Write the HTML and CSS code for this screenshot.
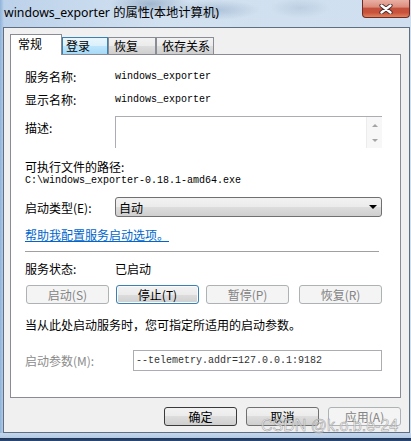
FILE: index.html
```html
<!DOCTYPE html>
<html lang="zh-CN">
<head>
<meta charset="utf-8">
<title>windows_exporter 的属性(本地计算机)</title>
<link rel="stylesheet" href="styles.css">
</head>
<body>
<div class="window">
  <div class="titlebar">
    <span class="title">windows_exporter 的属性(本地计算机)</span>
    <div class="close">
      <svg width="14" height="10" viewBox="0 0 14 10">
        <path d="M2.5 1.5 L11.5 8.5 M11.5 1.5 L2.5 8.5" stroke="#4a2a2a" stroke-width="4.2" stroke-linecap="round"/>
        <path d="M2.5 1.5 L11.5 8.5 M11.5 1.5 L2.5 8.5" stroke="#ffffff" stroke-width="2.4" stroke-linecap="round"/>
      </svg>
    </div>
  </div>
  <div class="client">
    <div class="tabs">
      <div class="tab active">常规</div>
      <div class="tab hot">登录</div>
      <div class="tab t3">恢复</div>
      <div class="tab t4">依存关系</div>
    </div>
    <div class="panel">
      <div class="field"><span class="label">服务名称:</span><span class="mono">windows_exporter</span></div>
      <div class="field f2"><span class="label">显示名称:</span><span class="mono">windows_exporter</span></div>
      <div class="field desc">
        <span class="label desc-label">描述:</span>
        <div class="textarea">
          <div class="scroll">
            <span class="arrow-up"></span>
            <span class="arrow-down"></span>
          </div>
        </div>
      </div>
      <div class="path-label">可执行文件的路径:</div>
      <div class="path mono">C:\windows_exporter-0.18.1-amd64.exe</div>
      <div class="field combo-row">
        <span class="label">启动类型(E):</span>
        <div class="combo"><span>自动</span><span class="combo-arrow"></span></div>
      </div>
      <a class="link" href="#">帮助我配置服务启动选项。</a>
      <div class="sep"></div>
      <div class="field status"><span class="label">服务状态:</span><span>已启动</span></div>
      <div class="btn-row">
        <div class="btn disabled">启动(S)</div>
        <div class="btn focused">停止(T)</div>
        <div class="btn disabled">暂停(P)</div>
        <div class="btn disabled last">恢复(R)</div>
      </div>
      <div class="info">当从此处启动服务时，您可指定所适用的启动参数。</div>
      <div class="field param">
        <span class="label param-label">启动参数(M):</span>
        <div class="input mono">--telemetry.addr=127.0.0.1:9182</div>
      </div>
    </div>
    <div class="footer">
      <div class="btn fbtn default">确定</div>
      <div class="btn fbtn">取消</div>
      <div class="btn fbtn disabled">应用(A)</div>
    </div>
  </div>
  <div class="bottom-frame"></div>
  <div class="watermark">CSDN @k.o.b.e-24</div>
</div>
</body>
</html>
```
FILE: styles.css
```css
html, body {
  margin: 0;
  padding: 0;
}
body {
  font-family: "Noto Sans CJK SC", "Noto Sans", sans-serif;
  font-size: 12px;
  color: #000;
}
.window {
  position: relative;
  width: 411px;
  height: 441px;
  overflow: hidden;
  display: flex;
  flex-direction: column;
  background:
    radial-gradient(ellipse 40px 12px at 150px 4px, rgba(120,148,178,0.55), rgba(120,148,178,0)),
    radial-gradient(ellipse 45px 10px at 215px 10px, rgba(130,158,188,0.45), rgba(130,158,188,0)),
    radial-gradient(ellipse 30px 10px at 300px 8px, rgba(150,175,200,0.35), rgba(150,175,200,0)),
    linear-gradient(to right, #8fb3da 0, #bcd2ea 4px, #d2e1f0 40%, #cfdfef 100%);
}
.titlebar {
  height: 27px;
  flex-shrink: 0;
  display: flex;
  align-items: flex-start;
}
.title {
  padding: 5px 0 0 4px;
  font-family: "Noto Sans", "Noto Sans CJK SC", sans-serif;
  font-size: 12.3px;
  line-height: 16px;
  color: #000;
  white-space: nowrap;
}
.close {
  margin-left: auto;
  margin-right: 1px;
  width: 48px;
  height: 18px;
  box-sizing: border-box;
  border: 1px solid #6e2d24;
  border-top: none;
  border-radius: 0 0 4px 4px;
  background: linear-gradient(#e9b0a3 0%, #dc8e7e 40%, #c4513c 50%, #c9533b 75%, #e0845f 100%);
  display: flex;
  align-items: center;
  justify-content: center;
}
.close svg { display: block; }
.client {
  margin-left: 3px;
  width: 407px;
  height: 406px;
  flex-shrink: 0;
  box-sizing: border-box;
  border: 1px solid #5f6f80;
  background: #f0f0f0;
  padding: 6px 8px 0 6px;
  display: flex;
  flex-direction: column;
}
.tabs {
  display: flex;
  align-items: flex-end;
  height: 21px;
  margin-bottom: -1px;
  position: relative;
  z-index: 1;
}
.tab {
  height: 17px;
  margin-bottom: 1px;
  box-sizing: border-box;
  border: 1px solid #898c95;
  border-bottom: none;
  background: linear-gradient(#f2f2f2 0%, #ebebeb 50%, #dddddd 50%, #cfcfcf 100%);
  line-height: 16px;
  white-space: nowrap;
}
.tab.active {
  height: 21px;
  margin-bottom: 0;
  width: 52px;
  padding-left: 7px;
  background: #fff;
  line-height: 18px;
}
.tab.hot {
  width: 46px;
  padding-left: 3px;
  border-color: #3c7fb1;
  background: linear-gradient(#eaf6fd 0%, #d9f0fc 50%, #bee6fd 50%, #a7d9f5 100%);
}
.tab.t3 {
  width: 48px;
  padding-left: 5px;
}
.tab.t4 {
  width: 58px;
  padding-left: 5px;
}
.panel {
  background: #fff;
  border: 1px solid #898c95;
  height: 344px;
  box-sizing: border-box;
  padding: 13px 18px 0 14px;
  display: flex;
  flex-direction: column;
}
.field {
  display: flex;
  align-items: center;
  height: 16px;
}
.label {
  width: 90px;
  flex-shrink: 0;
}
.mono {
  font-family: "Liberation Mono", "DejaVu Sans Mono", monospace;
  font-size: 10px;
}
.f2 { margin-top: 7px; }
.desc {
  margin-top: 9px;
  height: 32px;
  align-items: flex-start;
}
.desc-label {
  padding-top: 4px;
  line-height: 16px;
}
.textarea {
  flex: 1;
  height: 32px;
  box-sizing: border-box;
  border-top: 1px solid #abadb3;
  border-left: 1px solid #abadb3;
  background: #fff;
  display: flex;
  justify-content: flex-end;
}
.scroll {
  width: 16px;
  height: 31px;
  background: #f7f7f7;
  border-left: 1px solid #ececec;
  display: flex;
  flex-direction: column;
  align-items: center;
  justify-content: space-between;
  padding: 7px 0 6px;
  box-sizing: border-box;
}
.arrow-up, .arrow-down {
  width: 0;
  height: 0;
  border-left: 3px solid transparent;
  border-right: 3px solid transparent;
}
.arrow-up { border-bottom: 3px solid #a4a4a4; }
.arrow-down { border-top: 3px solid #a4a4a4; }
.path-label {
  margin-top: 12px;
  line-height: 14px;
}
.path {
  line-height: 14px;
}
.combo-row {
  margin-top: 9px;
  height: 20px;
}
.combo {
  flex: 1;
  height: 20px;
  box-sizing: border-box;
  border: 1px solid #707070;
  border-radius: 3px;
  background: linear-gradient(#f2f2f2 0%, #ebebeb 50%, #dddddd 50%, #cfcfcf 100%);
  display: flex;
  align-items: center;
  justify-content: space-between;
  padding: 0 4px 0 3px;
}
.combo-arrow {
  width: 0;
  height: 0;
  border-left: 4px solid transparent;
  border-right: 4px solid transparent;
  border-top: 4px solid #000;
}
.link {
  display: block;
  margin-top: 10px;
  line-height: 16px;
  color: #0066cc;
  text-decoration: underline;
  align-self: flex-start;
}
.sep {
  margin-top: 8px;
  margin-right: 3px;
  height: 1px;
  background: #a0a0a0;
}
.status { margin-top: 8px; }
.btn-row {
  margin-top: 9px;
  display: flex;
  gap: 7px;
  padding-left: 1px;
}
.btn {
  width: 83px;
  height: 19px;
  box-sizing: border-box;
  border: 1px solid #707070;
  border-radius: 3px;
  background: linear-gradient(#f2f2f2 0%, #ebebeb 50%, #dddddd 50%, #cfcfcf 100%);
  display: flex;
  align-items: center;
  justify-content: center;
  white-space: nowrap;
}
.btn.disabled {
  border-color: #adb2b5;
  background: #f4f4f4;
  color: #838383;
}
.btn.focused {
  border-color: #3c7fb1;
  box-shadow: inset 0 0 0 1px #f8fbfd;
}
.btn.last { margin-left: 3px; }
.info {
  margin-top: 13px;
  line-height: 16px;
}
.param {
  margin-top: 17px;
  height: 21px;
}
.param-label {
  width: 108px;
  color: #8b8b8b;
}
.input {
  flex: 1;
  height: 21px;
  box-sizing: border-box;
  border: 1px solid #abadb3;
  background: #fff;
  padding-left: 2px;
  line-height: 19px;
  color: #333;
}
.footer {
  margin-top: 9px;
  display: flex;
  justify-content: flex-end;
  gap: 9px;
}
.fbtn {
  width: 73px;
}
.btn.default {
  border-color: #3a3a3a;
}
.bottom-frame {
  flex: 1;
  background: linear-gradient(#c3d7ec 0, #b4cbe4 5px, #1e3350 5px, #2a4a78 100%);
}
.watermark {
  position: absolute;
  left: 261px;
  top: 416px;
  font-family: "Liberation Sans", Arial, sans-serif;
  font-size: 16px;
  line-height: 20px;
  color: rgba(255,255,255,0.6);
  -webkit-text-stroke: 0.5px #9a9a9a;
  white-space: nowrap;
}
```
